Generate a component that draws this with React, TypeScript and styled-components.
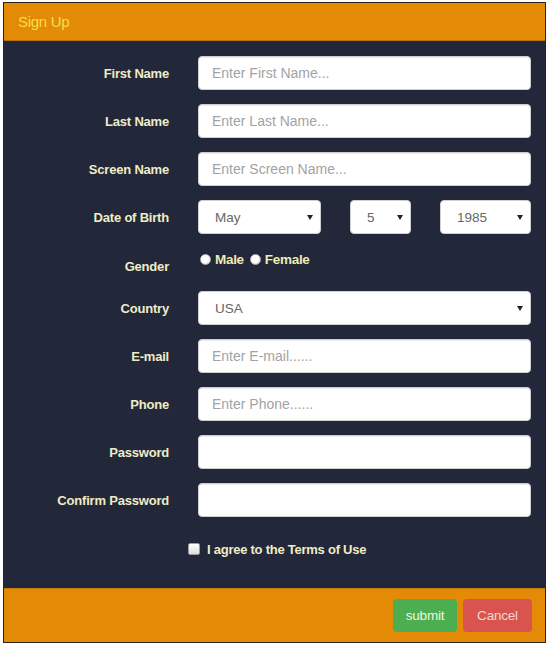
import React from 'react'
import styled, { createGlobalStyle } from 'styled-components'

const GlobalStyle = createGlobalStyle`
    html, body {
        margin: 0;
        padding: 0;
        background: #ffffff;
    }
    body {
        font-family: "Liberation Sans", Arial, sans-serif;
    }
`

const Page = styled.div`
    padding: 2px 4px 5px 3px;
`

const Panel = styled.div`
    display: flex;
    flex-direction: column;
    border: 1px solid #2a2418;
    background-color: #23273a;
`

const Header = styled.div`
    height: 37px;
    display: flex;
    align-items: center;
    padding-left: 14px;
    background-color: #e38a06;
    border-bottom: 1px solid #b8730a;
`

const Title = styled.span`
    color: #f5df4a;
    font-size: 15px;
    letter-spacing: -0.3px;
`

const Body = styled.form`
    display: flex;
    flex-direction: column;
    gap: 14px;
    padding: 15px 14px 21px 0;
`

const Row = styled.div<{ $height?: number }>`
    display: grid;
    grid-template-columns: 165px 1fr;
    column-gap: 29px;
    height: ${p => p.$height ?? 34}px;
`

const Label = styled.label<{ $offset?: number }>`
    display: flex;
    justify-content: flex-end;
    align-items: ${p => (p.$offset ? 'flex-start' : 'center')};
    padding-top: ${p => p.$offset ?? 0}px;
    color: #efecc6;
    font-size: 13px;
    font-weight: bold;
    letter-spacing: -0.2px;
    white-space: nowrap;
`

const TextInput = styled.input`
    box-sizing: border-box;
    width: 100%;
    height: 34px;
    border: 1px solid #cfcfcf;
    border-radius: 4px;
    padding: 0 13px;
    background: #ffffff;
    box-shadow: inset 0 1px 1px rgba(0, 0, 0, 0.08);
    font-family: inherit;
    font-size: 14px;
    color: #555;
    outline: none;
    &::placeholder {
        color: #a3a3a3;
    }
`

const DateGroup = styled.div`
    display: flex;
    justify-content: space-between;
`

const SelectWrap = styled.div<{ $width?: number }>`
    position: relative;
    width: ${p => (p.$width ? `${p.$width}px` : '100%')};
    height: 34px;
    &::after {
        content: '';
        position: absolute;
        right: 8px;
        top: 15px;
        border-left: 3px solid transparent;
        border-right: 3px solid transparent;
        border-top: 5px solid #222;
        pointer-events: none;
    }
`

const Select = styled.select`
    appearance: none;
    -webkit-appearance: none;
    box-sizing: border-box;
    width: 100%;
    height: 34px;
    border: 1px solid #cfcfcf;
    border-radius: 4px;
    padding: 0 16px;
    background: #ffffff;
    font-family: inherit;
    font-size: 13.5px;
    color: #666;
    outline: none;
`

const RadioGroup = styled.div`
    display: flex;
    align-items: center;
    gap: 4px;
    margin-top: 3px;
    height: 16px;
`

const RadioLabel = styled.label`
    display: flex;
    align-items: center;
    gap: 4px;
    color: #efe9b4;
    font-size: 13.5px;
    font-weight: bold;
    letter-spacing: -0.3px;
`

const RadioDot = styled.input`
    appearance: none;
    -webkit-appearance: none;
    width: 11px;
    height: 11px;
    margin: 0 0 0 2px;
    border-radius: 50%;
    background: radial-gradient(circle at 40% 40%, #ffffff 45%, #d6d6d6 100%);
    border: 1px solid #bbb;
`

const AgreeRow = styled.div`
    display: flex;
    align-items: center;
    gap: 7px;
    height: 36px;
    padding-left: 184px;
`

const CheckBox = styled.input`
    appearance: none;
    -webkit-appearance: none;
    width: 12px;
    height: 12px;
    margin: 0;
    border-radius: 2px;
    border: 1px solid #999;
    background: linear-gradient(#ffffff, #dcdcdc);
`

const AgreeText = styled.label`
    color: #efecc6;
    font-size: 13px;
    font-weight: bold;
    letter-spacing: -0.25px;
`

const Footer = styled.div`
    display: flex;
    justify-content: flex-end;
    gap: 6px;
    height: 54px;
    box-sizing: border-box;
    padding: 10px 13px 0 0;
    background-color: #e38a06;
    border-top: 1px solid #c37a0c;
`

const Button = styled.button<{ $tone: 'green' | 'red'; $width: number }>`
    width: ${p => p.$width}px;
    height: 33px;
    border: none;
    border-radius: 4px;
    background-color: ${p => (p.$tone === 'green' ? '#4cae50' : '#d9534f')};
    color: ${p => (p.$tone === 'green' ? '#eef6e0' : '#f4d6d4')};
    font-family: inherit;
    font-size: 13.5px;
    letter-spacing: -0.2px;
`

const fields = [
    { label: 'First Name', placeholder: 'Enter First Name...' },
    { label: 'Last Name', placeholder: 'Enter Last Name...' },
    { label: 'Screen Name', placeholder: 'Enter Screen Name...' },
]

const contactFields = [
    { label: 'E-mail', placeholder: 'Enter E-mail......' },
    { label: 'Phone', placeholder: 'Enter Phone......' },
    { label: 'Password', placeholder: '', type: 'password' },
    { label: 'Confirm Password', placeholder: '', type: 'password' },
]

const App: React.FC = () => {
    return (
        <Page>
            <GlobalStyle />
            <Panel>
                <Header>
                    <Title>Sign Up</Title>
                </Header>
                <Body onSubmit={e => e.preventDefault()}>
                    {fields.map(f => (
                        <Row key={f.label}>
                            <Label>{f.label}</Label>
                            <TextInput placeholder={f.placeholder} />
                        </Row>
                    ))}
                    <Row>
                        <Label>Date of Birth</Label>
                        <DateGroup>
                            <SelectWrap $width={123}>
                                <Select defaultValue="May">
                                    <option>May</option>
                                </Select>
                            </SelectWrap>
                            <SelectWrap $width={61}>
                                <Select defaultValue="5">
                                    <option>5</option>
                                </Select>
                            </SelectWrap>
                            <SelectWrap $width={91}>
                                <Select defaultValue="1985">
                                    <option>1985</option>
                                </Select>
                            </SelectWrap>
                        </DateGroup>
                    </Row>
                    <Row $height={29}>
                        <Label $offset={11}>Gender</Label>
                        <RadioGroup>
                            <RadioLabel>
                                <RadioDot type="radio" name="gender" />
                                Male
                            </RadioLabel>
                            <RadioLabel>
                                <RadioDot type="radio" name="gender" />
                                Female
                            </RadioLabel>
                        </RadioGroup>
                    </Row>
                    <Row>
                        <Label>Country</Label>
                        <SelectWrap>
                            <Select defaultValue="USA">
                                <option>USA</option>
                            </Select>
                        </SelectWrap>
                    </Row>
                    {contactFields.map(f => (
                        <Row key={f.label}>
                            <Label>{f.label}</Label>
                            <TextInput type={f.type ?? 'text'} placeholder={f.placeholder} />
                        </Row>
                    ))}
                    <AgreeRow>
                        <CheckBox type="checkbox" id="terms" />
                        <AgreeText htmlFor="terms">I agree to the Terms of Use</AgreeText>
                    </AgreeRow>
                </Body>
                <Footer>
                    <Button $tone="green" $width={64}>submit</Button>
                    <Button $tone="red" $width={69}>Cancel</Button>
                </Footer>
            </Panel>
        </Page>
    )
}

export default App
